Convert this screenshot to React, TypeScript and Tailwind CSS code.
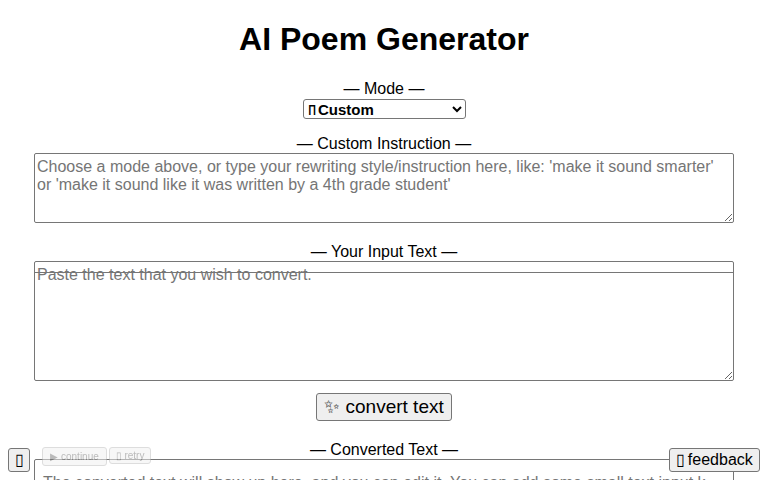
const TOFU = "\u25AF";
const GAP = "\u200A\u200A";

export default function App() {
  return (
    <div className="h-[480px] overflow-hidden bg-white text-black text-center font-['Liberation_Sans',Arial,sans-serif]">
      <h1 className="pt-[21px] text-[32px] leading-[37px] font-bold">AI Poem Generator</h1>
      <div className="mt-[21px] flex flex-col items-center px-[34px]">
        <div className="text-base leading-[20px]">— Mode —</div>
        <select
          defaultValue="custom"
          className="w-[163px] h-5 pb-[3px] bg-white border border-[#767676] rounded-[3px] text-[15px] font-bold font-['Liberation_Sans',Arial,sans-serif]"
        >
          <option value="custom">{TOFU}{GAP}Custom</option>
        </select>
        <div className="mt-[15px] text-base leading-[19px]">— Custom Instruction —</div>
        <textarea
          className="block w-[700px] h-[70px] border border-[#767676] rounded-[2px] px-[2px] pt-[4px] pb-[2px] text-base leading-[18px] placeholder:text-[#757575]"
          placeholder="Choose a mode above, or type your rewriting style/instruction here, like: 'make it sound smarter' or 'make it sound like it was written by a 4th grade student'"
        />
        <div className="mt-[20px] text-base leading-[18px]">— Your Input Text —</div>
        <div className="relative">
          <textarea
            className="block w-[700px] h-[120px] border border-[#767676] rounded-[2px] p-[2px] pt-[4px] text-base leading-[18px] placeholder:text-[#757575]"
            placeholder="Paste the text that you wish to convert."
          />
          <div className="absolute left-0 right-0 top-[11px] h-px bg-[#767676]" />
        </div>
        <button className="mt-3 h-7 px-[7px] bg-[#efefef] border border-[#767676] rounded-[3px] text-[19px] leading-[22px] font-['Liberation_Sans',Arial,sans-serif]">
          {"\u2728\uFE0E"} convert text
        </button>
        <div className="mt-5 text-base leading-[18px]">— Converted Text —</div>
        <textarea
          className="block w-[700px] h-[120px] border border-[#767676] rounded-[2px] pt-[14px] px-2 text-base leading-[18px] placeholder:text-[#757575]"
          placeholder="The converted text will show up here, and you can edit it. You can add some small text input k"
        />
      </div>
      <div className="fixed left-2 top-[448px] flex items-start">
        <button className="w-[22px] h-6 bg-[#efefef] border border-[#767676] rounded-[3px] text-base leading-none">{TOFU}</button>
      </div>
      <div className="fixed left-[42px] top-[447px] flex gap-[2px] opacity-50">
        <button className="h-[19px] w-[65px] bg-[#efefef] border border-[#bbbbbb] rounded-[3px] text-[10px] leading-none text-[#777777]">{"\u25B6"} continue</button>
        <button className="h-[17px] w-[42px] bg-[#efefef] border border-[#bbbbbb] rounded-[3px] text-[10px] leading-none text-[#777777]">{TOFU} retry</button>
      </div>
      <button className="fixed right-2 top-[448px] h-6 w-[91px] bg-[#efefef] border border-[#767676] rounded-[3px] text-base leading-none">{TOFU}{GAP}feedback</button>
    </div>
  );
}
